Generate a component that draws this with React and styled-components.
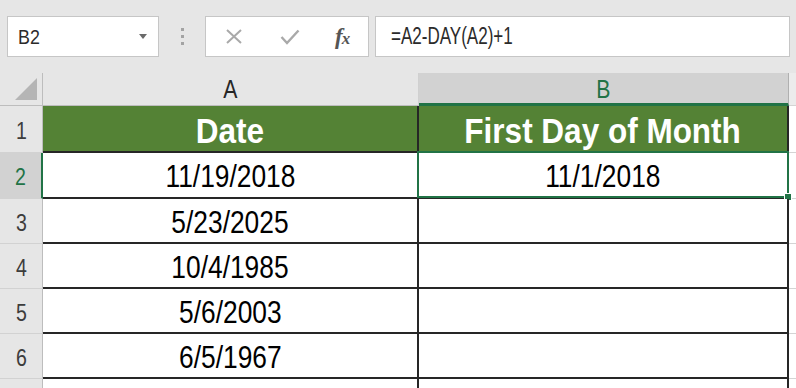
import React from "react";
import styled, { createGlobalStyle } from "styled-components";

const GlobalStyle = createGlobalStyle`
  html, body { margin: 0; padding: 0; overflow: hidden; background: #ffffff; }
  body { font-family: "Liberation Sans", Arial, sans-serif; }
  * { box-sizing: border-box; }
`;

const GREEN = "#217346";
const HEAD_BG = "#e6e6e6";
const SEL_BG = "#d2d2d2";
const LINE = "#262626";

const Page = styled.div`
  width: 796px;
  height: 388px;
  overflow: hidden;
  display: flex;
  flex-direction: column;
  background: ${HEAD_BG};
`;

const Toolbar = styled.div`
  height: 73px;
  flex: none;
  display: flex;
  align-items: flex-start;
  padding: 16px 0 0 7px;
  background: ${HEAD_BG};
`;

const Box = styled.div`
  height: 41px;
  width: ${(p) => p.$w}px;
  flex: none;
  background: #ffffff;
  border: 1px solid #c6c6c6;
  display: flex;
  align-items: center;
`;

const NameBox = styled(Box)`
  justify-content: space-between;
  padding: 0 11px 0 10px;
`;

const Caret = styled.span`
  width: 0;
  height: 0;
  border-left: 4.5px solid transparent;
  border-right: 4.5px solid transparent;
  border-top: 5px solid #6a6a6a;
`;

const Grip = styled.div`
  width: 46px;
  height: 41px;
  flex: none;
  display: flex;
  flex-direction: column;
  align-items: center;
  justify-content: center;
  gap: 4px;
`;

const Dot = styled.span`
  width: 3px;
  height: 3px;
  background: #a3a3a3;
`;

const FxBox = styled(Box)`
  padding: 0 0 0 19px;
  gap: 0;
`;

const IconSlot = styled.div`
  width: ${(p) => p.$w}px;
  flex: none;
  display: flex;
  align-items: center;
  justify-content: flex-start;
`;

const FxLabel = styled.span`
  font-family: "Liberation Serif", "Times New Roman", serif;
  font-style: italic;
  font-weight: bold;
  color: #555555;
  font-size: 23px;
  line-height: 1;
  letter-spacing: -1px;
  & > small {
    font-size: 17px;
  }
`;

const Spacer = styled.div`
  width: 6px;
  flex: none;
`;

const FormulaBox = styled(Box)`
  padding-left: 15px;
`;

const Text = styled.span`
  display: inline-block;
  white-space: nowrap;
  font-family: "Liberation Sans", Arial, sans-serif;
  font-size: ${(p) => p.$size}px;
  font-weight: ${(p) => (p.$bold ? 700 : 400)};
  color: ${(p) => p.$color || "#000"};
  transform: scaleX(${(p) => p.$sx || 1});
  transform-origin: ${(p) => p.$origin || "center"};
  line-height: 1;
`;

const Sheet = styled.div`
  flex: none;
  display: grid;
  grid-template-columns: 43px 376px 370px 100px;
  grid-template-rows: 33px 47px 46px 45px 45px 45px 45px 45px;
`;

const Corner = styled.div`
  background: ${HEAD_BG};
  border-right: 1px solid #bdbdbd;
  border-bottom: 1px solid #bdbdbd;
  display: flex;
  align-items: flex-end;
  justify-content: flex-end;
  padding: 0 5px 5px 0;
`;

const CornerMark = styled.span`
  width: 0;
  height: 0;
  border-left: 22px solid transparent;
  border-bottom: 22px solid #b5b5b5;
`;

const ColHeader = styled.div`
  background: ${(p) => (p.$selected ? SEL_BG : HEAD_BG)};
  border-right: 1px solid ${(p) => (p.$selected ? "#b0b0b0" : "#d0d0d0")};
  border-bottom: ${(p) => (p.$selected ? `3px solid ${GREEN}` : "1px solid #bdbdbd")};
  display: flex;
  align-items: center;
  justify-content: center;
  padding-top: ${(p) => (p.$selected ? 2 : 0)}px;
  overflow: hidden;
`;

const RowHeader = styled.div`
  background: ${(p) => (p.$selected ? SEL_BG : HEAD_BG)};
  border-right: ${(p) => (p.$selected ? `2px solid ${GREEN}` : "1px solid #bdbdbd")};
  border-bottom: 1px solid #d2d2d2;
  display: flex;
  align-items: center;
  justify-content: center;
  padding-top: 4px;
  overflow: hidden;
`;

const Cell = styled.div`
  position: relative;
  background: ${(p) => (p.$head ? "#548235" : "#ffffff")};
  border-right: 2px solid ${LINE};
  border-bottom: 2px solid ${LINE};
  display: flex;
  align-items: center;
  justify-content: center;
  padding-top: 3px;
`;

const EdgeCell = styled.div`
  background: ${(p) => (p.$header ? "#ececec" : "#ffffff")};
  border-bottom: 1px solid #d4d4d4;
`;

const Selection = styled.div`
  position: absolute;
  left: -2px;
  top: -2px;
  right: -2px;
  bottom: -1px;
  border: 2px solid ${GREEN};
  pointer-events: none;
`;

const FillHandle = styled.span`
  position: absolute;
  right: -5px;
  bottom: -5px;
  width: 8px;
  height: 8px;
  background: ${GREEN};
  border: 1px solid #ffffff;
`;

const rows = [
  { n: "1", a: "Date", b: "First Day of Month", head: true },
  { n: "2", a: "11/19/2018", b: "11/1/2018", selected: true },
  { n: "3", a: "5/23/2025", b: "" },
  { n: "4", a: "10/4/1985", b: "" },
  { n: "5", a: "5/6/2003", b: "" },
  { n: "6", a: "6/5/1967", b: "" },
  { n: "", a: "", b: "" },
];

function CellText({ head, children }) {
  if (!children) return null;
  return head ? (
    <Text $size={35} $bold $sx={0.9} $color="#ffffff">
      {children}
    </Text>
  ) : (
    <Text $size={31} $sx={0.85}>
      {children}
    </Text>
  );
}

export default function App() {
  return (
    <>
      <GlobalStyle />
      <Page>
        <Toolbar>
          <NameBox $w={152}>
            <Text $size={21} $sx={0.85} $origin="left center" $color="#2b2b2b">
              B2
            </Text>
            <Caret />
          </NameBox>
          <Grip>
            <Dot />
            <Dot />
            <Dot />
          </Grip>
          <FxBox $w={164}>
            <IconSlot $w={55}>
              <svg width="18" height="15" viewBox="0 0 18 15">
                <path d="M2 1 L16 14 M16 1 L2 14" stroke="#a9a9a9" strokeWidth="2" fill="none" />
              </svg>
            </IconSlot>
            <IconSlot $w={55}>
              <svg width="20" height="16" viewBox="0 0 20 16">
                <path d="M1.5 8 L7 14 L18.5 1.5" stroke="#a9a9a9" strokeWidth="2.4" fill="none" />
              </svg>
            </IconSlot>
            <IconSlot $w={30}>
              <FxLabel>
                f<small>x</small>
              </FxLabel>
            </IconSlot>
          </FxBox>
          <Spacer />
          <FormulaBox $w={415}>
            <Text $size={23} $sx={0.74} $origin="left center" $color="#2b2b2b">
              =A2-DAY(A2)+1
            </Text>
          </FormulaBox>
        </Toolbar>
        <Sheet>
          <Corner>
            <CornerMark />
          </Corner>
          <ColHeader>
            <Text $size={25} $sx={0.85} $color="#262626">
              A
            </Text>
          </ColHeader>
          <ColHeader $selected>
            <Text $size={25} $sx={0.85} $color={GREEN}>
              B
            </Text>
          </ColHeader>
          <EdgeCell $header />
          {rows.map((r, i) => (
            <React.Fragment key={i}>
              <RowHeader $selected={r.selected}>
                {r.n && (
                  <Text $size={23} $sx={0.85} $color={r.selected ? GREEN : "#3c3c3c"}>
                    {r.n}
                  </Text>
                )}
              </RowHeader>
              <Cell $head={r.head}>
                <CellText head={r.head}>{r.a}</CellText>
              </Cell>
              <Cell $head={r.head}>
                <CellText head={r.head}>{r.b}</CellText>
                {r.selected && (
                  <Selection>
                    <FillHandle />
                  </Selection>
                )}
              </Cell>
              <EdgeCell />
            </React.Fragment>
          ))}
        </Sheet>
      </Page>
    </>
  );
}
